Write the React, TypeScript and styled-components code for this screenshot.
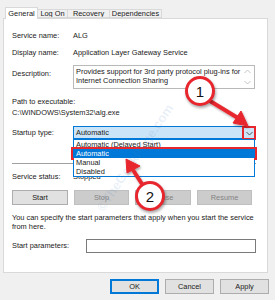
import styled, { createGlobalStyle } from 'styled-components';

const GlobalStyle = createGlobalStyle`
  html, body {
    margin: 0;
    padding: 0;
    background: #f0f0f0;
  }
  * {
    box-sizing: border-box;
  }
`;

const Dialog = styled.div`
  position: relative;
  width: 275px;
  height: 300px;
  overflow: hidden;
  background: #f0f0f0;
  padding: 7px 0 0 3px;
  font-family: 'Liberation Sans', Arial, sans-serif;
  font-size: 7.4px;
  color: #1a1a1a;
  display: flex;
  flex-direction: column;
`;

const TabBar = styled.div`
  display: flex;
  align-items: flex-end;
  height: 11px;
  padding-left: 2px;
`;

const Tab = styled.div<{ active?: boolean; w: number }>`
  width: ${(p) => p.w}px;
  height: ${(p) => (p.active ? 12 : 9)}px;
  margin-bottom: ${(p) => (p.active ? -1 : 0)}px;
  background: ${(p) => (p.active ? '#fff' : '#f0f0f0')};
  border: 1px solid #d9d9d9;
  border-bottom: ${(p) => (p.active ? 'none' : '1px solid #d9d9d9')};
  border-left: ${(p) => (p.active ? '1px solid #d9d9d9' : 'none')};
  display: flex;
  align-items: center;
  justify-content: center;
  position: relative;
  z-index: ${(p) => (p.active ? 1 : 0)};
  white-space: nowrap;
  overflow: hidden;
`;

const Panel = styled.div`
  width: 265px;
  height: 255px;
  background: #fff;
  border: 1px solid #d9d9d9;
  padding: 0 0 0 8px;
  display: flex;
  flex-direction: column;
  position: relative;
`;

const Row = styled.div<{ top: number; h?: number }>`
  display: flex;
  align-items: ${(p) => (p.h ? 'flex-start' : 'center')};
  margin-top: ${(p) => p.top}px;
  height: ${(p) => p.h || 11}px;
  line-height: 11px;
  white-space: nowrap;
`;

const Label = styled.div`
  width: 61px;
  flex: none;
`;

const Text = styled.div<{ top?: number }>`
  margin-top: ${(p) => p.top || 0}px;
  line-height: 11px;
  white-space: nowrap;
`;

const DescBox = styled.div`
  width: 182px;
  height: 24px;
  border: 1px solid #b9b9b9;
  padding: 1px 10px 0 2px;
  line-height: 9px;
  position: relative;
  white-space: nowrap;
  overflow: hidden;
`;

const ScrollArrow = styled.div<{ down?: boolean }>`
  position: absolute;
  right: 3px;
  ${(p) => (p.down ? 'bottom: 3px;' : 'top: 3px;')}
  width: 7px;
  height: 5px;
  color: #c4c4c4;
  display: flex;
`;

const ComboWrap = styled.div`
  position: relative;
  width: 182px;
  height: 13px;
`;

const Combo = styled.div`
  width: 100%;
  height: 100%;
  background: #cce4f7;
  border: 1px solid #0078d7;
  padding-left: 2px;
  display: flex;
  align-items: center;
`;

const ChevronBox = styled.div`
  position: absolute;
  right: -1px;
  top: 0px;
  width: 14px;
  height: 14px;
  border: 2px solid #e8262e;
  display: flex;
  align-items: center;
  justify-content: center;
  color: #555;
`;

const DropList = styled.div`
  position: absolute;
  left: 0;
  top: 13px;
  width: 182px;
  background: #fff;
  border: 1px solid #0078d7;
  z-index: 3;
`;

const DropItem = styled.div<{ selected?: boolean }>`
  height: 9px;
  line-height: 9px;
  padding-left: 2px;
  background: ${(p) => (p.selected ? '#0078d7' : '#fff')};
  color: ${(p) => (p.selected ? '#fff' : '#1a1a1a')};
  position: relative;
`;

const SelectedMark = styled.div`
  position: absolute;
  left: -3px;
  right: -3px;
  top: -2px;
  bottom: -2px;
  border: 2px solid #e8262e;
`;

const Separator = styled.div`
  margin-top: 24px;
  width: 244px;
  height: 1px;
  background: #a0a0a0;
`;

const ButtonRow = styled.div<{ top: number; gap: number }>`
  display: flex;
  gap: ${(p) => p.gap}px;
  margin-top: ${(p) => p.top}px;
`;

const Button = styled.div<{ disabled?: boolean; primary?: boolean; w: number }>`
  width: ${(p) => p.w}px;
  height: 15px;
  background: ${(p) => (p.disabled ? '#cccccc' : '#e1e1e1')};
  border: 1px solid ${(p) => (p.primary ? '#0078d7' : p.disabled ? '#bfbfbf' : '#adadad')};
  box-shadow: ${(p) => (p.primary ? 'inset 0 0 0 1px #0078d7' : 'none')};
  color: ${(p) => (p.disabled ? '#838383' : '#1a1a1a')};
  display: flex;
  align-items: center;
  justify-content: center;
`;

const Hint = styled.div`
  margin-top: 8px;
  line-height: 9px;
  white-space: nowrap;
`;

const Input = styled.div`
  width: 170px;
  height: 14px;
  border: 1px solid #7a7a7a;
  background: #fff;
`;

const Footer = styled.div`
  display: flex;
  justify-content: flex-end;
  gap: 6px;
  padding: 6px 6px 0 0;
`;

const Watermark = styled.div`
  position: absolute;
  left: 72px;
  top: 150px;
  transform: rotate(-56deg);
  font-size: 13px;
  font-weight: bold;
  color: rgba(70, 130, 200, 0.12);
  white-space: nowrap;
  pointer-events: none;
  z-index: 4;
`;

const Overlay = styled.svg`
  position: absolute;
  left: 0;
  top: 0;
  pointer-events: none;
  z-index: 5;
`;

const Badge = styled.div<{ x: number; y: number }>`
  position: absolute;
  left: ${(p) => p.x - 15}px;
  top: ${(p) => p.y - 15}px;
  width: 30px;
  height: 30px;
  border-radius: 50%;
  background: #fff;
  border: 3px solid #e8262e;
  box-shadow: 1px 2px 3px rgba(0, 0, 0, 0.35);
  display: flex;
  align-items: center;
  justify-content: center;
  font-family: 'Liberation Sans', Arial, sans-serif;
  font-size: 15px;
  color: #111;
  z-index: 6;
`;

const Chevron = ({ up }: { up?: boolean }) => (
  <svg width="7" height="5" viewBox="0 0 7 5">
    <path
      d={up ? 'M0.5 4 L3.5 1 L6.5 4' : 'M0.5 1 L3.5 4 L6.5 1'}
      fill="none"
      stroke="currentColor"
      strokeWidth="1"
    />
  </svg>
);

const tabs = [
  { name: 'General', w: 33 },
  { name: 'Log On', w: 30 },
  { name: 'Recovery', w: 42 },
  { name: 'Dependencies', w: 52 },
];

const startupOptions = ['Automatic (Delayed Start)', 'Automatic', 'Manual', 'Disabled'];

function App() {
  return (
    <>
      <GlobalStyle />
      <Dialog>
        <TabBar>
          {tabs.map((t, i) => (
            <Tab key={t.name} active={i === 0} w={t.w}>
              {t.name}
            </Tab>
          ))}
        </TabBar>
        <Panel>
          <Row top={11}>
            <Label>Service name:</Label>
            ALG
          </Row>
          <Row top={6}>
            <Label>Display name:</Label>
            Application Layer Gateway Service
          </Row>
          <Row top={7} h={24}>
            <Label style={{ marginTop: 3 }}>Description:</Label>
            <DescBox>
              Provides support for 3rd party protocol plug-ins for
              <br />
              Internet Connection Sharing
              <ScrollArrow>
                <Chevron up />
              </ScrollArrow>
              <ScrollArrow down>
                <Chevron />
              </ScrollArrow>
            </DescBox>
          </Row>
          <Text top={7}>Path to executable:</Text>
          <Text>C:\WINDOWS\System32\alg.exe</Text>
          <Row top={8} h={13}>
            <Label style={{ marginTop: 1 }}>Startup type:</Label>
            <ComboWrap>
              <Combo>Automatic</Combo>
              <ChevronBox>
                <Chevron />
              </ChevronBox>
              <DropList>
                {startupOptions.map((o) => (
                  <DropItem key={o} selected={o === 'Automatic'}>
                    {o}
                    {o === 'Automatic' && <SelectedMark />}
                  </DropItem>
                ))}
              </DropList>
            </ComboWrap>
          </Row>
          <Separator />
          <Row top={7}>
            <Label>Service status:</Label>
            Stopped
          </Row>
          <ButtonRow top={8} gap={6}>
            <Button w={56}>Start</Button>
            <Button w={55} disabled>
              Stop
            </Button>
            <Button w={56} disabled>
              Pause
            </Button>
            <Button w={55} disabled>
              Resume
            </Button>
          </ButtonRow>
          <Hint>
            You can specify the start parameters that apply when you start the service
            <br />
            from here.
          </Hint>
          <Row top={8} h={14}>
            <Label style={{ width: 74, lineHeight: '14px' }}>Start parameters:</Label>
            <Input />
          </Row>
        </Panel>
        <Footer>
          <Button w={49} primary>
            OK
          </Button>
          <Button w={49}>Cancel</Button>
          <Button w={49}>Apply</Button>
        </Footer>
        <Watermark>©TheGeekPage.com</Watermark>
        <Overlay width="275" height="300" viewBox="0 0 275 300">
          <defs>
            <filter id="sh" x="-20%" y="-20%" width="140%" height="140%">
              <feDropShadow dx="1" dy="1.5" stdDeviation="1" floodOpacity="0.35" />
            </filter>
          </defs>
          <g fill="#e8262e" stroke="#e8262e" filter="url(#sh)">
            <line x1="210" y1="101" x2="238" y2="118" strokeWidth="4" />
            <polygon points="248,126 233,123 241,111" strokeWidth="1" />
            <line x1="142" y1="184" x2="133" y2="170" strokeWidth="4" />
            <polygon points="126,159 127,173 140,166" strokeWidth="1" />
          </g>
        </Overlay>
        <Badge x={200} y={91}>1</Badge>
        <Badge x={150} y={196}>2</Badge>
      </Dialog>
    </>
  );
}

export default App;
